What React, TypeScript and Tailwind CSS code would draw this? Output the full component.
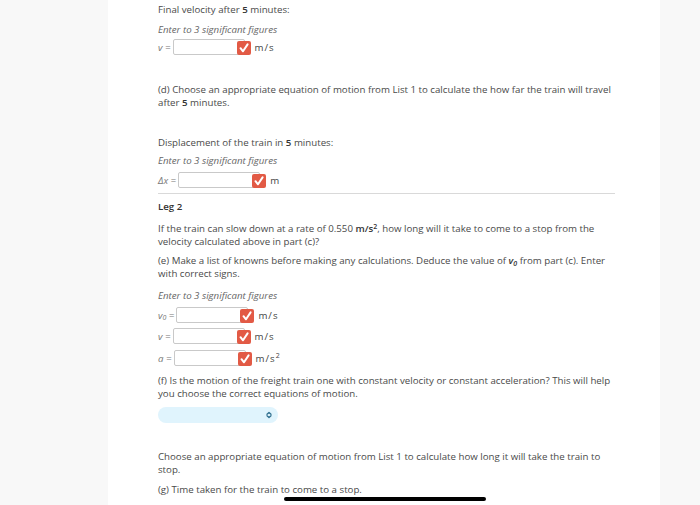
import React from "react";

function Check() {
  return (
    <span className="absolute right-[-7px] top-[1px] w-[14px] h-[14px] rounded-[2px] bg-[#e25a45] flex items-center justify-center">
      <svg width="10" height="10" viewBox="0 0 10 10">
        <path d="M1.5 5.2 L4 8.3 L8.6 1.4" fill="none" stroke="#fff" strokeWidth="2" strokeLinecap="round" strokeLinejoin="round" />
      </svg>
    </span>
  );
}

function Field({ label, unit, width = 72 }: { label: React.ReactNode; unit: React.ReactNode; width?: number }) {
  return (
    <div className="flex items-center h-[16px]">
      <span className="italic text-[#777] mr-[2px]">{label}</span>
      <span className="relative inline-block h-[16px] border border-[#c9c9c9] rounded-[2px] bg-white" style={{ width }}>
        <Check />
      </span>
      <span className="ml-[10px] text-[#444] tracking-[1px]">{unit}</span>
    </div>
  );
}

const Italic = ({ children }: { children: React.ReactNode }) => <p className="italic text-[#666]">{children}</p>;

export default function App() {
  return (
    <div className="relative flex w-[700px] h-[505px] overflow-hidden bg-[#f8f8f8] text-[9.7px] leading-[13px] text-[#4a4a4a]" style={{ fontFamily: "'Open Sans', 'Noto Sans', sans-serif" }}>
      <div className="w-[108px] shrink-0" />
      <div className="w-[552px] shrink-0 bg-white pl-[50px] pr-[40px] pt-[3px]">
        <p>Final velocity after <span className="font-semibold text-[#333]">5</span> minutes:</p>
        <div className="mt-[7px]"><Italic>Enter to 3 significant figures</Italic></div>
        <div className="mt-[3px]"><Field label="v =" unit="m/s" /></div>

        <p className="mt-[28px]">(d) Choose an appropriate equation of motion from List 1 to calculate the how far the train will travel after <span className="font-semibold text-[#333]">5</span> minutes.</p>

        <p className="mt-[27px]">Displacement of the train in <span className="font-semibold text-[#333]">5</span> minutes:</p>
        <div className="mt-[5px]"><Italic>Enter to 3 significant figures</Italic></div>
        <div className="mt-[5px]"><Field label={<>Δx =</>} unit="m" width={82} /></div>

        <div className="mt-[5px] mr-[5px] h-px bg-[#d9d9d9]" />

        <p className="mt-[6px] font-semibold text-[#333]">Leg 2</p>
        <p className="mt-[9px]">If the train can slow down at a rate of 0.550 <span className="font-semibold text-[#333]">m/s<sup className="text-[7px] leading-none">2</sup></span>, how long will it take to come to a stop from the velocity calculated above in part (c)?</p>
        <p className="mt-[6px]">(e) Make a list of knowns before making any calculations. Deduce the value of <span className="font-semibold italic text-[#333]">v<sub className="text-[7px] leading-none">0</sub></span> from part (c). Enter with correct signs.</p>
        <div className="mt-[9px]"><Italic>Enter to 3 significant figures</Italic></div>
        <div className="mt-[5px]"><Field label={<>v<sub className="text-[7px] leading-none">0</sub> =</>} unit="m/s" /></div>
        <div className="mt-[5px]"><Field label="v =" unit="m/s" /></div>
        <div className="mt-[6px]"><Field label="a =" unit={<>m/s<sup className="text-[7px] leading-none">2</sup></>} /></div>

        <p className="mt-[8px]">(f) Is the motion of the freight train one with constant velocity or constant acceleration? This will help you choose the correct equations of motion.</p>
        <div className="mt-[7px] w-[120px] h-[16px] rounded-full bg-[#e0f4fd] flex items-center justify-end pr-[5px]">
          <svg width="8" height="8" viewBox="0 0 8 8">
            <path d="M2 3.3 L4 1.5 L6 3.3 M2 4.7 L4 6.5 L6 4.7" fill="none" stroke="#2f6f8f" strokeWidth="1.3" strokeLinecap="round" strokeLinejoin="round" />
          </svg>
        </div>

        <p className="mt-[27px]">Choose an appropriate equation of motion from List 1 to calculate how long it will take the train to stop.</p>
        <p className="mt-[7px]">(g) Time taken for the train to come to a stop.</p>
      </div>
      <div className="flex-1" />
      <div className="absolute left-[284px] top-[497px] w-[202px] h-[4px] rounded-full bg-black" />
    </div>
  );
}
